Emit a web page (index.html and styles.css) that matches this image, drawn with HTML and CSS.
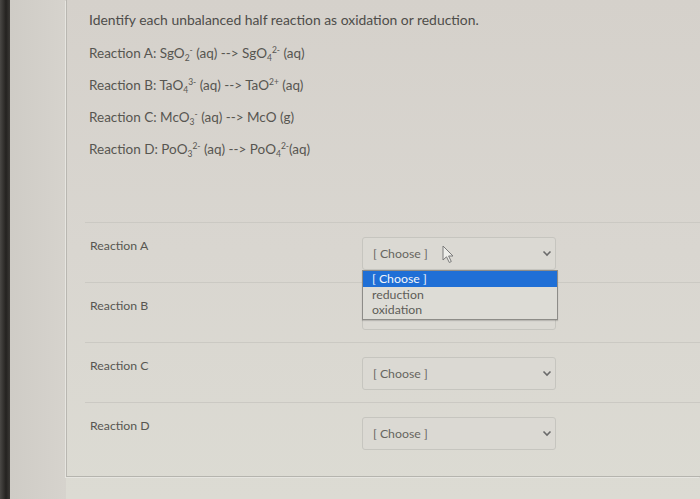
FILE: index.html
```html
<!DOCTYPE html>
<html>
<head>
<meta charset="utf-8">
<link rel="stylesheet" href="styles.css">
</head>
<body>
<div class="screen">
  <div class="bezel"></div>
  <div class="margin"></div>
  <div class="panel">
    <div class="question">
      <p class="intro">Identify each unbalanced half reaction as oxidation or reduction.</p>
      <p>Reaction A: SgO<sub>2</sub><sup>-</sup> (aq) --&gt; SgO<sub>4</sub><sup>2-</sup> (aq)</p>
      <p>Reaction B: TaO<sub>4</sub><sup>3-</sup> (aq) --&gt; TaO<sup>2+</sup> (aq)</p>
      <p>Reaction C: McO<sub>3</sub><sup>-</sup> (aq) --&gt; McO (g)</p>
      <p>Reaction D: PoO<sub>3</sub><sup>2-</sup> (aq) --&gt; PoO<sub>4</sub><sup>2-</sup>(aq)</p>
    </div>
    <div class="answers">
      <div class="row top">
        <div class="label">Reaction A</div>
        <div class="select open">
          <span class="value">[ Choose ]</span>
          <svg class="chev" width="10" height="7" viewBox="0 0 10 7"><path d="M1.5 1.5 L5 5 L8.5 1.5" fill="none" stroke="#6a6a6a" stroke-width="1.6"/></svg>
          <svg class="cursor" width="13" height="19" viewBox="0 0 13 19"><path d="M1 1 L1 15 L4.5 11.8 L7.3 17.5 L9.3 16.5 L6.6 11 L11 11 Z" fill="#eeeeea" stroke="#7a7a7a" stroke-width="1"/></svg>
          <div class="menu">
            <div class="opt sel">[ Choose ]</div>
            <div class="opt">reduction</div>
            <div class="opt">oxidation</div>
          </div>
        </div>
      </div>
      <div class="row">
        <div class="label">Reaction B</div>
        <div class="select covered">
          <span class="value">[ Choose ]</span>
          <svg class="chev" width="10" height="7" viewBox="0 0 10 7"><path d="M1.5 1.5 L5 5 L8.5 1.5" fill="none" stroke="#6a6a6a" stroke-width="1.6"/></svg>
        </div>
      </div>
      <div class="row">
        <div class="label">Reaction C</div>
        <div class="select">
          <span class="value">[ Choose ]</span>
          <svg class="chev" width="10" height="7" viewBox="0 0 10 7"><path d="M1.5 1.5 L5 5 L8.5 1.5" fill="none" stroke="#6a6a6a" stroke-width="1.6"/></svg>
        </div>
      </div>
      <div class="row">
        <div class="label">Reaction D</div>
        <div class="select">
          <span class="value">[ Choose ]</span>
          <svg class="chev" width="10" height="7" viewBox="0 0 10 7"><path d="M1.5 1.5 L5 5 L8.5 1.5" fill="none" stroke="#6a6a6a" stroke-width="1.6"/></svg>
        </div>
      </div>
    </div>
  </div>
</div>
</body>
</html>
```

FILE: styles.css
```css
html, body {
  margin: 0;
  padding: 0;
  width: 700px;
  height: 499px;
  overflow: hidden;
}
body {
  font-family: Lato, "Open Sans", sans-serif;
  color: #575651;
  background: linear-gradient(180deg, #d5d1cb 0%, #d9d6d0 50%, #dcdbd3 100%);
}
.screen {
  display: flex;
  height: 499px;
  width: 700px;
}
.bezel {
  width: 10px;
  flex: none;
  background: linear-gradient(90deg, #4a4845 0%, #242220 60%, #3a3835 100%);
}
.margin {
  width: 56px;
  flex: none;
  background: linear-gradient(90deg, #cfccc6, #d6d3cd);
}
.panel {
  flex: 1;
  min-width: 0;
  height: 477px;
  border-left: 1px solid #b9b7b1;
  border-bottom: 1px solid #b5b4ae;
  box-shadow: -1px 1px 0 #e6e5e0;
  padding-left: 18px;
  box-sizing: border-box;
}
.question {
  padding-left: 4px;
  padding-top: 11px;
  font-size: 13.5px;
  height: 211px;
}
.question p {
  margin: 0 0 15px 0;
  line-height: 17px;
  white-space: nowrap;
}
.question p.intro {
  margin-bottom: 17px;
  font-size: 13.9px;
  color: #4e4d4a;
}
sub, sup {
  font-size: 8.5px;
  line-height: 0;
}
sub { vertical-align: -3px; }
sup { vertical-align: 5px; }
.row {
  display: grid;
  grid-template-columns: 277px 194px;
  height: 60px;
  border-top: 1px solid #cbc9c3;
  box-sizing: border-box;
  font-size: 12.3px;
  position: relative;
}
.row.top {
  z-index: 2;
}
.label {
  padding-left: 5px;
  padding-top: 15px;
}
.select {
  position: relative;
  margin-top: 14px;
  height: 33px;
  border: 1px solid #c6c5bf;
  border-radius: 3px;
  box-sizing: border-box;
  display: flex;
  align-items: center;
  justify-content: space-between;
  padding: 0 3px 0 10px;
  font-size: 12.3px;
  background: #dbd9d3;
}
.value {
  color: #66655f;
}
.covered .value {
  visibility: hidden;
}
.cursor {
  position: absolute;
  left: 79px;
  top: 7px;
}
.menu {
  position: absolute;
  left: -1px;
  top: 32px;
  width: 194px;
  border: 1px solid #8d8c88;
  background: #dddcd6;
  font-size: 12.3px;
  line-height: 15px;
  padding-bottom: 2px;
  box-shadow: 0 1px 1px rgba(0,0,0,0.15);
}
.opt {
  padding-left: 9px;
  color: #5d5c58;
}
.opt.sel {
  background: #1f6fd6;
  color: #f4f6fa;
  line-height: 16px;
}
```
